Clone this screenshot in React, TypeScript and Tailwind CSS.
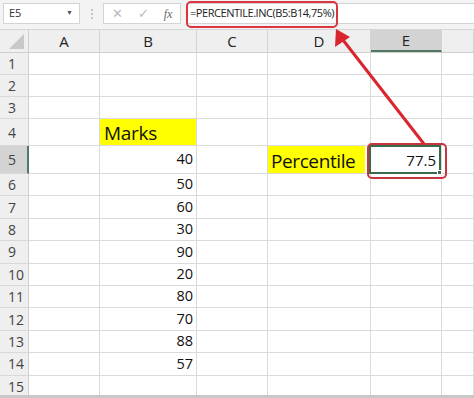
import React from "react";

const cols = [
  { key: "A", w: "w-[71px]" },
  { key: "B", w: "w-[97px]" },
  { key: "C", w: "w-[71px]" },
  { key: "D", w: "w-[103px]" },
  { key: "E", w: "w-[71px]" },
  { key: "F", w: "flex-1" },
];

const marks: Record<number, string> = {
  5: "40",
  6: "50",
  7: "60",
  8: "30",
  9: "90",
  10: "20",
  11: "80",
  12: "70",
  13: "88",
  14: "57",
};

function rowHeight(r: number) {
  if (r === 4) return "h-[27px]";
  if (r === 5) return "h-[28px]";
  if (r <= 3) return "h-[22px]";
  return "h-[22.4px]";
}

function Cell({ col, row }: { col: string; row: number }) {
  const w = cols.find((c) => c.key === col)!.w;
  let content: React.ReactNode = null;
  let extra = "";
  if (col === "B" && row === 4) {
    extra = "bg-[#ffff00]";
    content = <span className="pl-[4px] pt-[3px] text-[19px] tracking-[-0.3px] leading-none">Marks</span>;
  } else if (col === "B" && marks[row]) {
    content = <span className="ml-auto pr-[3px] text-[14.5px] leading-none">{marks[row]}</span>;
  } else if (col === "D" && row === 5) {
    content = (
      <span className="bg-[#ffff00] h-full flex items-center w-[97px] pl-[3px] pt-[3px] text-[19px] tracking-[-0.4px] leading-none">
        Percentile
      </span>
    );
  } else if (col === "E" && row === 5) {
    content = (
      <div className="relative h-[calc(100%+2px)] -ml-[2px] -mt-[1px] w-[calc(100%+3px)] border-2 border-[#386b4c] flex items-center">
        <span className="ml-auto pr-[3px] pt-[2px] text-[15px] leading-none">77.5</span>
        <div className="absolute -right-[3px] -bottom-[3px] w-[5px] h-[5px] bg-[#386b4c] border border-white" />
      </div>
    );
  }
  return (
    <div className={`${w} ${extra} shrink-0 border-r border-b border-[#dadada] flex items-center text-[#111]`}>
      {content}
    </div>
  );
}

export default function App() {
  const rows = Array.from({ length: 15 }, (_, i) => i + 1);
  return (
    <div
      className="relative w-[474px] h-[398px] overflow-hidden bg-white select-none"
      style={{ fontFamily: '"Open Sans", "Liberation Sans", sans-serif' }}
    >
      {/* Formula bar */}
      <div className="h-[30px] bg-[#f3f3f3] border-b border-[#d6d6d6] flex items-start pt-[3px] pl-[3px]">
        <div className="w-[77px] h-[21px] bg-white border border-[#d4d4d4] flex items-center pl-[5px] text-[11px] text-[#333]">
          E5
          <span className="ml-auto mr-[6px] text-[7px] text-[#555]">▼</span>
        </div>
        <div className="w-[23px] flex flex-col items-center gap-[2px] pt-[6px]">
          <span className="w-[2px] h-[2px] bg-[#c4c4c4]" />
          <span className="w-[2px] h-[2px] bg-[#c4c4c4]" />
          <span className="w-[2px] h-[2px] bg-[#c4c4c4]" />
        </div>
        <div className="w-[78px] h-[21px] bg-white border border-[#d4d4d4] flex items-center justify-around text-[#b9b9b9]">
          <span className="text-[13px] leading-none">✕</span>
          <span className="text-[13px] leading-none">✓</span>
          <span
            className="text-[12px] italic text-[#666] leading-none"
            style={{ fontFamily: '"Liberation Serif", serif' }}
          >
            fx
          </span>
        </div>
        <div className="ml-[5px] flex-1 h-[21px] bg-white border-y border-l border-[#d4d4d4] flex items-center pl-[3px] text-[11px] tracking-[-0.45px] text-[#222]">
          =PERCENTILE.INC(B5:B14,75%)
        </div>
      </div>

      {/* Column headers */}
      <div className="flex h-[23px] bg-[#efefef] border-b border-[#cfcfcf]">
        <div className="w-[29px] shrink-0 border-r border-[#cfcfcf] relative">
          <div
            className="absolute right-[4px] bottom-[3px] w-[15px] h-[15px] bg-[#c9c9c9]"
            style={{ clipPath: "polygon(100% 0, 100% 100%, 0 100%)" }}
          />
        </div>
        {cols.map((c) => (
          <div
            key={c.key}
            className={`${c.w} shrink-0 border-r border-[#d4d4d4] flex items-center justify-center text-[15px] text-[#222] ${
              c.key === "E" ? "bg-[#d3d3d3] border-b-2 border-b-[#4f7a61] text-[#2c5a3e]" : ""
            }`}
          >
            {c.key === "F" ? "" : c.key}
          </div>
        ))}
      </div>

      {/* Grid rows */}
      {rows.map((r) => (
        <div key={r} className={`flex ${rowHeight(r)}`}>
          <div
            className={`w-[29px] shrink-0 border-b border-[#d8d8d8] flex items-center pl-[8px] text-[14px] text-[#444] ${
              r === 5 ? "bg-[#d3d3d3] border-r-2 border-r-[#4f7a61] text-[#2c5a3e]" : "bg-[#efefef] border-r border-r-[#cfcfcf]"
            }`}
          >
            {r}
          </div>
          {cols.map((c) => (
            <Cell key={c.key} col={c.key} row={r} />
          ))}
        </div>
      ))}

      {/* bottom scroll strip */}
      <div className="absolute left-0 right-0 bottom-0 h-[3px] bg-[#c8c8c8]" />

      {/* Red annotation outlines */}
      <div className="absolute left-[186px] top-[1px] w-[152px] h-[27px] border-2 border-[#d9363e] rounded-[5px]" />
      <div className="absolute left-[367px] top-[143px] w-[80px] h-[36px] border-2 border-[#c8353d] rounded-[5px]" />

      {/* Arrow */}
      <svg className="absolute left-0 top-0 pointer-events-none" width="474" height="398">
        <line x1="424" y1="144" x2="343" y2="40" stroke="#d9262e" strokeWidth="3" />
        <polygon points="336,29 335,47 350,37" fill="#d9262e" />
      </svg>
    </div>
  );
}
